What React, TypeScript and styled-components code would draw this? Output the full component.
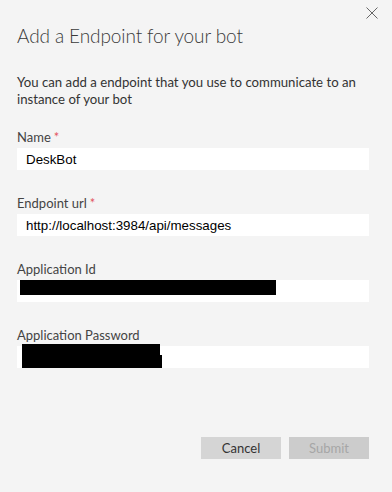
import React, { useState } from 'react'
import styled, { createGlobalStyle } from 'styled-components'

const GlobalStyle = createGlobalStyle`
  html, body {
    margin: 0;
    padding: 0;
    background: #f4f4f4;
  }
  body {
    font-family: "Segoe UI", Lato, "Noto Sans", sans-serif;
    color: #333333;
  }
`

const Dialog = styled.div`
  position: relative;
  box-sizing: border-box;
  width: 392px;
  height: 492px;
  padding: 20px 23px 0 17px;
  background: #f4f4f4;
`

const CloseButton = styled.button`
  position: absolute;
  top: 7px;
  right: 14px;
  width: 12px;
  height: 12px;
  padding: 0;
  border: none;
  background: none;
  cursor: pointer;
  display: flex;
`

const Title = styled.h1`
  margin: 0;
  font-size: 19px;
  font-weight: 300;
  letter-spacing: -0.1px;
  line-height: 32px;
  color: #3a3a3a;
`

const Description = styled.p`
  margin: 22px 0 18px;
  font-size: 13.2px;
  line-height: 17px;
  color: #333333;
`

const Field = styled.div`
  display: flex;
  flex-direction: column;
  margin-bottom: 22px;
`

const Label = styled.label`
  font-size: 13px;
  line-height: 22px;
  color: #444444;
`

const Required = styled.span`
  color: #e3545f;
  margin-left: 3px;
`

const Input = styled.input`
  box-sizing: border-box;
  height: 22px;
  width: 100%;
  border: none;
  outline: none;
  background: #ffffff;
  padding: 0 9px;
  font-family: "Liberation Sans", Arial, sans-serif;
  font-size: 13.33px;
  color: #000000;
`

const RedactedWrap = styled.div`
  position: relative;
  height: 22px;
  background: #ffffff;
`

const Redaction = styled.div<{ $left: number; $top: number; $w: number; $h: number }>`
  position: absolute;
  left: ${p => p.$left}px;
  top: ${p => p.$top}px;
  width: ${p => p.$w}px;
  height: ${p => p.$h}px;
  background: #000000;
`

const Footer = styled.div`
  display: flex;
  justify-content: flex-end;
  gap: 8px;
  margin-top: 69px;
`

const Button = styled.button<{ $disabled?: boolean }>`
  width: 80px;
  height: 22px;
  border: none;
  padding: 0;
  font-family: "Segoe UI", Lato, "Noto Sans", sans-serif;
  font-size: 13px;
  background: ${p => (p.$disabled ? '#cccccc' : '#d5d5d5')};
  color: ${p => (p.$disabled ? '#a6a6a6' : '#333333')};
  cursor: ${p => (p.$disabled ? 'default' : 'pointer')};
`

const App: React.FC = () => {
  const [name, setName] = useState<string>('DeskBot')
  const [url, setUrl] = useState<string>('http://localhost:3984/api/messages')

  return (
    <>
      <GlobalStyle />
      <Dialog>
        <CloseButton aria-label="Close">
          <svg width="12" height="12" viewBox="0 0 12 12">
            <path d="M0.5 0.5 L11.5 11.5 M11.5 0.5 L0.5 11.5" stroke="#666666" strokeWidth="1" fill="none" />
          </svg>
        </CloseButton>
        <Title>Add a Endpoint for your bot</Title>
        <Description>
          You can add a endpoint that you use to communicate to an instance of your bot
        </Description>

        <Field>
          <Label>
            Name<Required>*</Required>
          </Label>
          <Input value={name} onChange={e => setName(e.target.value)} />
        </Field>

        <Field>
          <Label>
            Endpoint url<Required>*</Required>
          </Label>
          <Input value={url} onChange={e => setUrl(e.target.value)} />
        </Field>

        <Field>
          <Label>Application Id</Label>
          <RedactedWrap>
            <Redaction $left={3} $top={0} $w={256} $h={15} />
          </RedactedWrap>
        </Field>

        <Field>
          <Label>Application Password</Label>
          <RedactedWrap>
            <Redaction $left={5} $top={-2} $w={138} $h={12} />
            <Redaction $left={5} $top={9} $w={140} $h={13} />
          </RedactedWrap>
        </Field>

        <Footer>
          <Button>Cancel</Button>
          <Button $disabled disabled>
            Submit
          </Button>
        </Footer>
      </Dialog>
    </>
  )
}

export default App
